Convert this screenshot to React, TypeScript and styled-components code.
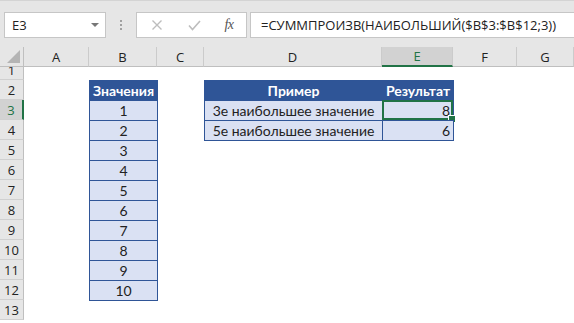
import React from "react";
import styled, { createGlobalStyle, css } from "styled-components";

const Global = createGlobalStyle`
  html, body { margin: 0; padding: 0; background: #ffffff; }
  body { width: 574px; height: 323px; overflow: hidden; font-family: "Open Sans", "Liberation Sans", sans-serif; }
  * { box-sizing: border-box; }
`;

const GREEN = "#217346";
const BLUE = "#2f5597";
const FILL = "#dae1f3";

const Page = styled.div`
  width: 574px;
  height: 323px;
  overflow: hidden;
  display: flex;
  flex-direction: column;
`;

const Toolbar = styled.div`
  height: 47px;
  flex: none;
  background: #e6e6e6;
  border-top: 1px solid #d4d4d4;
  display: flex;
  align-items: flex-start;
  padding: 11px 0 0 4px;
`;

const NameBox = styled.div`
  width: 102px;
  height: 26px;
  background: #fff;
  border: 1px solid #c6c6c6;
  display: flex;
  align-items: center;
  justify-content: space-between;
  padding: 0 6px 0 7px;
  font-size: 13px;
  color: #222;
`;

const DropArrow = styled.span`
  width: 0;
  height: 0;
  border-left: 4px solid transparent;
  border-right: 4px solid transparent;
  border-top: 4px solid #777;
`;

const Grip = styled.div`
  width: 30px;
  height: 26px;
  display: flex;
  flex-direction: column;
  align-items: center;
  justify-content: center;
  gap: 2px;
`;

const GripDot = styled.span`
  width: 2px;
  height: 2px;
  background: #a0a0a0;
`;

const ButtonBox = styled.div`
  width: 111px;
  height: 26px;
  background: #fff;
  border: 1px solid #c6c6c6;
  display: flex;
  align-items: center;
  padding-left: 12px;
`;

const IconSlot = styled.span<{ $w: number }>`
  width: ${(p) => p.$w}px;
  display: flex;
  align-items: center;
  justify-content: center;
`;

const Fx = styled.span`
  font-family: "Liberation Serif", "DejaVu Serif", serif;
  font-style: italic;
  font-size: 14px;
  color: #555;
  letter-spacing: -0.5px;
`;

const FormulaInput = styled.div`
  flex: 1;
  height: 26px;
  margin-left: 3px;
  background: #fff;
  border: 1px solid #c6c6c6;
  border-right: none;
  display: flex;
  align-items: center;
  padding-left: 10px;
  font-size: 13px;
  color: #222;
  white-space: nowrap;
  overflow: hidden;
`;

const COLS = "24px 65px 68px 47px 178px 71px 64px 1fr";

const Grid = styled.div`
  flex: 1;
  display: grid;
  grid-template-columns: ${COLS};
  grid-auto-rows: 20px;
  grid-template-rows: 20px 13px;
  background: #fff;
  font-family: "Lato", "Open Sans", sans-serif;
  font-size: 14px;
  color: #222;
`;

const Corner = styled.div`
  background: #e6e6e6;
  border-right: 1px solid #bfbfbf;
  border-bottom: 1px solid #bfbfbf;
  position: relative;
  &::after {
    content: "";
    position: absolute;
    right: 3px;
    bottom: 3px;
    width: 0;
    height: 0;
    border-left: 13px solid transparent;
    border-bottom: 13px solid #b4b4b4;
  }
`;

const ColHead = styled.div<{ $active?: boolean }>`
  background: #e6e6e6;
  border-right: 1px solid #cbcbcb;
  border-bottom: 1px solid #bfbfbf;
  display: flex;
  align-items: center;
  justify-content: center;
  font-family: "Open Sans", sans-serif;
  font-size: 13px;
  color: #222;
  ${(p) =>
    p.$active &&
    css`
      background: #d2d2d2;
      color: ${GREEN};
      border-bottom: 2px solid ${GREEN};
    `}
`;

const RowHead = styled.div<{ $active?: boolean; $clip?: boolean }>`
  background: #e6e6e6;
  border-right: 1px solid #bfbfbf;
  border-bottom: 1px solid #d0d0d0;
  display: flex;
  align-items: ${(p) => (p.$clip ? "flex-end" : "center")};
  justify-content: center;
  overflow: hidden;
  font-family: "Open Sans", sans-serif;
  font-size: 13px;
  color: #222;
  line-height: 20px;
  ${(p) =>
    p.$active &&
    css`
      background: #d2d2d2;
      color: ${GREEN};
      border-right: 2px solid ${GREEN};
    `}
`;

const RowLabel = styled.span<{ $clip?: boolean }>`
  display: block;
  height: 20px;
  flex: none;
  margin-bottom: ${(p) => (p.$clip ? "-1px" : "0")};
`;

const Blank = styled.div``;

type Kind = "head" | "data";

const Cell = styled.div<{ $kind: Kind; $align?: "left" | "center" | "right" }>`
  position: relative;
  margin: 0 -1px -1px 0;
  border: 1px solid ${BLUE};
  display: flex;
  align-items: center;
  padding: 0 3px;
  white-space: nowrap;
  justify-content: ${(p) =>
    p.$align === "right" ? "flex-end" : p.$align === "left" ? "flex-start" : "center"};
  ${(p) =>
    p.$kind === "head"
      ? css`
          background: ${BLUE};
          color: #fff;
          font-weight: 700;
        `
      : css`
          background: ${FILL};
          color: #222;
        `}
`;

const Active = styled.div`
  position: absolute;
  left: -1px;
  top: -1px;
  right: 0px;
  bottom: 0px;
  border: 2px solid ${GREEN};
  pointer-events: none;
  &::after {
    content: "";
    position: absolute;
    right: -5px;
    bottom: -5px;
    width: 6px;
    height: 6px;
    background: ${GREEN};
    border: 1px solid #fff;
  }
`;

const letters = ["A", "B", "C", "D", "E", "F", "G"];

const values = [1, 2, 3, 4, 5, 6, 7, 8, 9, 10];

function Row({ n, children, clip }: { n: number; children?: React.ReactNode; clip?: boolean }) {
  return (
    <>
      <RowHead $active={n === 3} $clip={clip}>
        <RowLabel $clip={clip}>{n}</RowLabel>
      </RowHead>
      {children}
    </>
  );
}

export default function App() {
  const rows: React.ReactNode[] = [];
  for (let n = 1; n <= 13; n++) {
    const cells: React.ReactNode[] = [];
    cells.push(<Blank key="a" />);
    if (n === 2) cells.push(<Cell key="b" $kind="head">Значения</Cell>);
    else if (n >= 3 && n <= 12) cells.push(<Cell key="b" $kind="data">{values[n - 3]}</Cell>);
    else cells.push(<Blank key="b" />);
    cells.push(<Blank key="c" />);
    if (n === 2) {
      cells.push(<Cell key="d" $kind="head">Пример</Cell>);
      cells.push(<Cell key="e" $kind="head">Результат</Cell>);
    } else if (n === 3) {
      cells.push(<Cell key="d" $kind="data">3е наибольшее значение</Cell>);
      cells.push(
        <Cell key="e" $kind="data" $align="right">
          8
          <Active />
        </Cell>
      );
    } else if (n === 4) {
      cells.push(<Cell key="d" $kind="data">5е наибольшее значение</Cell>);
      cells.push(<Cell key="e" $kind="data" $align="right">6</Cell>);
    } else {
      cells.push(<Blank key="d" />);
      cells.push(<Blank key="e" />);
    }
    cells.push(<Blank key="f" />);
    cells.push(<Blank key="g" />);
    rows.push(
      <Row key={n} n={n} clip={n === 1}>
        {cells}
      </Row>
    );
  }

  return (
    <Page>
      <Global />
      <Toolbar>
        <NameBox>
          <span>E3</span>
          <DropArrow />
        </NameBox>
        <Grip>
          <GripDot />
          <GripDot />
          <GripDot />
        </Grip>
        <ButtonBox>
          <IconSlot $w={16}>
            <svg width="12" height="12" viewBox="0 0 12 12">
              <path d="M1.5 1.5 L10.5 10.5 M10.5 1.5 L1.5 10.5" stroke="#bdbdbd" strokeWidth="1.4" fill="none" />
            </svg>
          </IconSlot>
          <IconSlot $w={58}>
            <svg width="13" height="11" viewBox="0 0 13 11">
              <path d="M1 5.5 L4.5 9.5 L12 1" stroke="#bdbdbd" strokeWidth="1.6" fill="none" />
            </svg>
          </IconSlot>
          <IconSlot $w={12}>
            <Fx>fx</Fx>
          </IconSlot>
        </ButtonBox>
        <FormulaInput>=СУММПРОИЗВ(НАИБОЛЬШИЙ($B$3:$B$12;3))</FormulaInput>
      </Toolbar>
      <Grid>
        <Corner />
        {letters.map((l) => (
          <ColHead key={l} $active={l === "E"}>
            {l}
          </ColHead>
        ))}
        {rows}
      </Grid>
    </Page>
  );
}
